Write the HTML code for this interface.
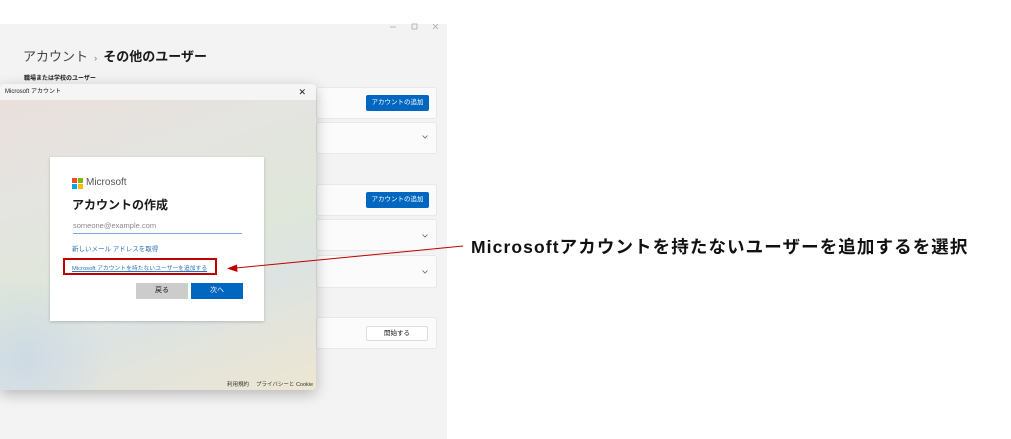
<!DOCTYPE html>
<html><head><meta charset="utf-8"><style>
*{margin:0;padding:0;box-sizing:border-box}
body{width:1011px;height:439px;background:#fff;position:relative;overflow:hidden;font-family:"Liberation Sans","Noto Sans CJK JP",sans-serif;color:#1a1a1a}
.a{position:absolute;white-space:nowrap}
.card{position:absolute;left:316px;width:121px;background:#fbfbfb;border:1px solid #e8e8e8;border-radius:3px}
.btn{position:absolute;left:366px;width:63px;height:16px;background:#0067c0;color:#fff;font-size:6.5px;text-align:center;line-height:16px;border-radius:2px}
.chev{position:absolute;left:422px}
</style></head><body>
<div class="a" style="left:0;top:24px;width:447px;height:415px;background:#f3f3f3"></div>
<svg class="a" style="left:385px;top:22px" width="60" height="10"><line x1="5" y1="5" x2="11" y2="5" stroke="#aaa" stroke-width="0.8"/><rect x="27" y="2" width="5" height="5" fill="none" stroke="#aaa" stroke-width="0.8"/><path d="M48 2l5 5M53 2l-5 5" stroke="#aaa" stroke-width="0.8"/></svg>
<div class="a" style="left:23px;top:46px;font-size:13px;color:#444">アカウント <span style="font-size:9px;color:#777">&nbsp;›&nbsp;</span> <b style="color:#1a1a1a">その他のユーザー</b></div>
<div class="a" style="left:24px;top:73px;font-size:6px;font-weight:bold">職場または学校のユーザー</div>
<div class="card" style="top:87px;height:32px"></div>
<div class="btn" style="top:95px">アカウントの追加</div>
<div class="card" style="top:122px;height:32px"></div><svg class="chev" style="top:135px" width="6" height="4"><path d="M0.5 0.5l2.5 2.5 2.5-2.5" fill="none" stroke="#666" stroke-width="0.8"/></svg>
<div class="card" style="top:184px;height:32px"></div>
<div class="btn" style="top:192px">アカウントの追加</div>
<div class="card" style="top:219px;height:32px"></div><svg class="chev" style="top:234px" width="6" height="4"><path d="M0.5 0.5l2.5 2.5 2.5-2.5" fill="none" stroke="#666" stroke-width="0.8"/></svg>
<div class="card" style="top:255px;height:33px"></div><svg class="chev" style="top:270px" width="6" height="4"><path d="M0.5 0.5l2.5 2.5 2.5-2.5" fill="none" stroke="#666" stroke-width="0.8"/></svg>
<div class="card" style="top:317px;height:32px"></div>
<div class="a" style="left:366px;top:326px;width:62px;height:15px;background:#fff;border:1px solid #ddd;border-radius:2px;font-size:6.5px;text-align:center;line-height:13px">開始する</div>

<div class="a" style="left:0;top:84px;width:316px;height:306px;border-radius:4px;box-shadow:0 4px 14px rgba(0,0,0,.25);overflow:hidden;background:linear-gradient(160deg,#eadfdc 0%,#e4e4e0 30%,#dfe6da 55%,#dde3e2 70%,#ede6d2 100%)">
 <div style="position:absolute;left:0;top:0;width:316px;height:16px;background:#f5f5f5;font-size:6px;line-height:16px;padding-left:5px">Microsoft アカウント<span style="position:absolute;right:10px;font-size:9px">✕</span></div>
 <div style="position:absolute;left:0;top:200px;width:120px;height:106px;background:radial-gradient(circle at 20% 70%,rgba(200,215,230,.7),transparent 70%)"></div>
 <div class="a" style="left:227px;top:296px;font-size:5.5px;color:#333">利用規約　 プライバシーと Cookie</div>
</div>
<div class="a" style="left:50px;top:157px;width:214px;height:164px;background:#fff;box-shadow:0 1px 3px rgba(0,0,0,.2)">
 <div class="a" style="left:22px;top:21px;width:11px;height:11px">
  <div class="a" style="left:0;top:0;width:5px;height:5px;background:#f25022"></div>
  <div class="a" style="left:6px;top:0;width:5px;height:5px;background:#7fba00"></div>
  <div class="a" style="left:0;top:6px;width:5px;height:5px;background:#00a4ef"></div>
  <div class="a" style="left:6px;top:6px;width:5px;height:5px;background:#ffb900"></div>
 </div>
 <div class="a" style="left:36px;top:20px;font-size:10px;color:#555">Microsoft</div>
 <div class="a" style="left:22px;top:39px;font-size:12px;font-weight:bold">アカウントの作成</div>
 <div class="a" style="left:23px;top:64px;font-size:7.5px;color:#888">someone@example.com</div>
 <div class="a" style="left:23px;top:76px;width:169px;height:1px;background:#7aa8d6"></div>
 <div class="a" style="left:22px;top:86px;font-size:6.5px;color:#2f6fb5">新しいメール アドレスを取得</div>
 <div class="a" style="left:13px;top:101px;width:154px;height:17px;border:2px solid #c00000"></div>
 <div class="a" style="left:22px;top:106px;font-size:5.8px;color:#2f6fb5;text-decoration:underline">Microsoft アカウントを持たないユーザーを追加する</div>
 <div class="a" style="left:86px;top:126px;width:52px;height:16px;background:#ccc;font-size:7px;text-align:center;line-height:16px">戻る</div>
 <div class="a" style="left:141px;top:126px;width:52px;height:16px;background:#0067c0;color:#fff;font-size:7px;text-align:center;line-height:16px">次へ</div>
</div>
<svg class="a" style="left:0;top:0" width="1011" height="439">
 <line x1="463" y1="246" x2="236" y2="268" stroke="#c00000" stroke-width="1"/>
 <polygon points="227,268.5 237,264.5 237.5,272" fill="#c00000"/>
</svg>
<div class="a" style="left:471px;top:234px;font-size:17.5px;letter-spacing:1.1px;font-weight:bold;color:#111">Microsoftアカウントを持たないユーザーを追加するを選択</div>
</body></html>
